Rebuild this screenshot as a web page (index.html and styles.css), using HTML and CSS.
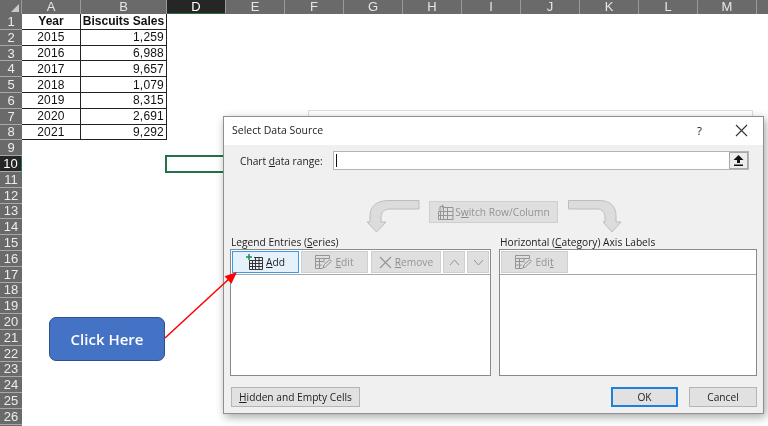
FILE: index.html
```html
<!DOCTYPE html>
<html lang="en">
<head>
<meta charset="utf-8">
<title>Select Data Source</title>
<link rel="stylesheet" href="styles.css">
</head>
<body>
<svg class="defs" width="0" height="0" aria-hidden="true">
  <symbol id="i-table" viewBox="0 0 17 16">
    <path d="M3.500 6.500h13v9h-13zM3.500 9.500h13M3.500 12.500h13M6.500 6.500v9M9.500 3.500v12M13 3.500v12M8 3.500h8.500v3" fill="none" stroke="#333"/>
    <path d="M3 0v6M0 3h6" fill="none" stroke="#1f8f50" stroke-width="1.500"/>
  </symbol>
  <symbol id="i-edit" viewBox="0 0 17 16">
    <path d="M.5 1.500h14v3h-14zM.5 4.500v10h7M4.500 4.500v10M9 4.500v4M.5 7.500h8M.5 11h6" fill="none" stroke="currentColor"/>
    <path d="M8 14l.8-3 6-5.500 1.700 1.700-6 5.600z" fill="none" stroke="currentColor"/>
  </symbol>
  <symbol id="i-switch" viewBox="0 0 17 16">
    <path d="M1.500 7.500h5v8h-5zM6.500 3.500h9.500v12h-9.500zM6.500 7.500h9.500M6.500 11.500h9.500M10.500 3.500v12M1.500 11.500h5M3.500 7.500v8" fill="none" stroke="currentColor"/>
    <path d="M3 5V2.500h3M5 .8l2 1.700-2 1.700M1.500 5l1.500 1.500L4.500 5" fill="none" stroke="currentColor"/>
  </symbol>
</svg>

<div class="sheet">
  <div class="row colhead">
    <div class="corner"><span class="corner-mark"></span></div>
    <div class="ch w-a">A</div>
    <div class="ch w-b">B</div>
    <div class="ch w-c active">D</div>
    <div class="ch w-c">E</div>
    <div class="ch w-c">F</div>
    <div class="ch w-c">G</div>
    <div class="ch w-c">H</div>
    <div class="ch w-c">I</div>
    <div class="ch w-c">J</div>
    <div class="ch w-c">K</div>
    <div class="ch w-c">L</div>
    <div class="ch w-c">M</div>
    <div class="ch w-rest"></div>
  </div>
  <div class="row"><div class="rh">1</div><div class="cell w-a head">Year</div><div class="cell w-b head">Biscuits Sales</div></div>
  <div class="row"><div class="rh">2</div><div class="cell w-a">2015</div><div class="cell w-b num">1,259</div></div>
  <div class="row"><div class="rh">3</div><div class="cell w-a">2016</div><div class="cell w-b num">6,988</div></div>
  <div class="row"><div class="rh">4</div><div class="cell w-a">2017</div><div class="cell w-b num">9,657</div></div>
  <div class="row"><div class="rh">5</div><div class="cell w-a">2018</div><div class="cell w-b num">1,079</div></div>
  <div class="row"><div class="rh">6</div><div class="cell w-a">2019</div><div class="cell w-b num">8,315</div></div>
  <div class="row"><div class="rh">7</div><div class="cell w-a">2020</div><div class="cell w-b num">2,691</div></div>
  <div class="row"><div class="rh">8</div><div class="cell w-a">2021</div><div class="cell w-b num">9,292</div></div>
  <div class="row"><div class="rh">9</div></div>
  <div class="row"><div class="rh active">10</div></div>
  <div class="row"><div class="rh">11</div></div>
  <div class="row"><div class="rh">12</div></div>
  <div class="row"><div class="rh">13</div></div>
  <div class="row"><div class="rh">14</div></div>
  <div class="row"><div class="rh">15</div></div>
  <div class="row"><div class="rh">16</div></div>
  <div class="row"><div class="rh">17</div></div>
  <div class="row"><div class="rh">18</div></div>
  <div class="row"><div class="rh">19</div></div>
  <div class="row"><div class="rh">20</div></div>
  <div class="row"><div class="rh">21</div></div>
  <div class="row"><div class="rh">22</div></div>
  <div class="row"><div class="rh">23</div></div>
  <div class="row"><div class="rh">24</div></div>
  <div class="row"><div class="rh">25</div></div>
  <div class="row"><div class="rh">26</div></div>
  <div class="row"><div class="rh"></div></div>
</div>

<div class="selected-cell"></div>
<div class="chart-frame"></div>

<section class="dialog">
  <header class="titlebar">
    <span class="title">Select Data Source</span>
    <span class="help">?</span>
    <svg class="close" width="13" height="13" viewBox="0 0 13 13"><path d="M1 1l11 11M12 1L1 12" fill="none" stroke="#333" stroke-width="1.100"/></svg>
  </header>
  <div class="body">
    <div class="range-row">
      <label class="range-label">Chart <u>d</u>ata range:</label>
      <div class="range-input">
        <span class="caret"></span>
        <span class="collapse">
          <svg width="11" height="11" viewBox="0 0 11 11"><path d="M5.500 0L10.500 5H7V8H4V5H.5zM1 9.500h9V11H1z" fill="#111"/></svg>
        </span>
      </div>
    </div>
    <div class="switch-row">
      <svg class="bend" width="54" height="33" viewBox="0 0 54 33"><path d="M52 .5V9H24C17 9 14 12 14 18V22H19L9.500 32 0 22H3V16C3 6 10 .5 22 .5Z" fill="#dcdcdc" stroke="#bdbdbd"/></svg>
      <button class="btn off switch"><svg class="ico" width="17" height="16"><use href="#i-switch"/></svg><span>S<u>w</u>itch Row/Column</span></button>
      <svg class="bend bend-right" width="54" height="33" viewBox="0 0 54 33"><path d="M.5 .5V9H29C34 9 37 12 37 18V22H35L44 32 53 22H48V16C48 6 42 .5 31 .5Z" fill="#dcdcdc" stroke="#bdbdbd"/></svg>
    </div>
    <div class="lists">
      <div class="list-col left">
        <div class="list-label">Legend Entries (<u>S</u>eries)</div>
        <div class="listbox">
          <div class="toolbar">
            <button class="btn add"><svg class="ico" width="17" height="16"><use href="#i-table"/></svg><span><u>A</u>dd</span></button>
            <button class="btn off edit"><svg class="ico" width="17" height="16"><use href="#i-edit"/></svg><span><u>E</u>dit</span></button>
            <button class="btn off remove"><svg class="ico" width="13" height="13" viewBox="0 0 13 13"><path d="M1 1l11 11M12 1L1 12" fill="none" stroke="currentColor" stroke-width="1.100"/></svg><span><u>R</u>emove</span></button>
            <button class="btn off move"><svg width="11" height="7" viewBox="0 0 11 7"><path d="M1 6l4.500-5L10 6" fill="none" stroke="currentColor"/></svg></button>
            <button class="btn off move"><svg width="11" height="7" viewBox="0 0 11 7"><path d="M1 1l4.500 5L10 1" fill="none" stroke="currentColor"/></svg></button>
          </div>
          <div class="list-area"></div>
        </div>
      </div>
      <div class="list-col right">
        <div class="list-label">Horizontal (<u>C</u>ategory) Axis Labels</div>
        <div class="listbox">
          <div class="toolbar">
            <button class="btn off edit"><svg class="ico" width="17" height="16"><use href="#i-edit"/></svg><span>Edi<u>t</u></span></button>
          </div>
          <div class="list-area"></div>
        </div>
      </div>
    </div>
    <footer class="foot">
      <button class="btn plain hidden-cells"><span><u>H</u>idden and Empty Cells</span></button>
      <div class="foot-actions">
        <button class="btn plain ok">OK</button>
        <button class="btn plain cancel">Cancel</button>
      </div>
    </footer>
  </div>
</section>

<div class="callout">Click Here</div>
<svg class="pointer" width="90" height="80" viewBox="0 0 90 80">
  <path d="M5 73L70 13" fill="none" stroke="#f00" stroke-width="1.500"/>
  <path d="M77 7L71.400 18.700 64.600 11.300z" fill="#f00"/>
</svg>
</body>
</html>
```

FILE: styles.css
```css
* { box-sizing: border-box; }
html, body { margin: 0; padding: 0; }
body {
  position: relative;
  width: 768px;
  height: 426px;
  overflow: hidden;
  background: #fff;
  font-family: "Open Sans", "Noto Sans", sans-serif;
  color: #222;
}
.defs { position: absolute; }

/* Sheet */
.sheet { display: flex; flex-direction: column; filter: blur(.35px); }
.row { display: flex; height: 15.8px; flex: none; }
.colhead { height: 14px; background: #6a6a6a; }
.corner { width: 22px; position: relative; border-right: 1px solid #9a9a9a; }
.corner-mark {
  position: absolute; right: 2px; bottom: 2px;
  border-style: solid; border-width: 0 0 8px 8px;
  border-color: transparent transparent #c9c9c9 transparent;
}
.ch {
  display: flex; align-items: center; justify-content: center;
  height: 14px;
  font: 13px/14px "Liberation Sans", Arial, sans-serif;
  color: #e6e6e6;
  background: #6a6a6a;
  border-right: 1px solid #9a9a9a;
}
.ch.active { background: #262626; color: #fff; border-bottom: 1px solid #217346; }
.w-a { width: 59px; flex: none; }
.w-b { width: 86px; flex: none; }
.w-c { width: 59px; flex: none; }
.w-rest { flex: 1; border-right: 0; }
.rh {
  width: 22px; flex: none;
  display: flex; align-items: center; justify-content: center;
  font: 13px "Liberation Sans", Arial, sans-serif;
  color: #ececec;
  background: #6a6a6a;
  border-bottom: 1px solid #a8a8a8;
}
.rh.active { background: #262626; color: #fff; border-right: 1px solid #217346; }
.cell {
  display: flex; align-items: center; justify-content: center;
  font: 12px "Liberation Sans", Arial, sans-serif;
  letter-spacing: .2px;
  color: #111;
  border-right: 1px solid #222;
  border-bottom: 1px solid #222;
}
.cell.num { justify-content: flex-end; padding-right: 2px; }
.cell.head { font-weight: 700; letter-spacing: 0; white-space: nowrap; }

.selected-cell {
  position: absolute; left: 165px; top: 155px;
  width: 62px; height: 18px;
  border: 2px solid #217346;
  filter: blur(.3px);
}
.chart-frame {
  position: absolute; left: 308px; top: 110px;
  width: 445px; height: 20px;
  background: #fff;
  border: 1px solid #dedede;
  border-bottom: 0;
}

/* Dialog */
.dialog {
  position: absolute; left: 223px; top: 116px;
  width: 541px; height: 298px;
  display: flex; flex-direction: column;
  background: #f0f0f0;
  border: 1px solid #8f8f8f;
  box-shadow: 2px 3px 9px rgba(0,0,0,.35);
  font-size: 10.2px;
  color: #222;
}
.dialog u { text-underline-offset: 1px; }
.dialog svg { display: block; flex: none; }
.titlebar {
  display: flex; align-items: center;
  height: 28px; flex: none;
  padding: 0 15px 2px 8px;
  background: #fff;
}
.title { flex: 1; font-size: 10.5px; filter: blur(.25px); }
.help { width: 12px; margin-right: 26px; font-size: 11px; color: #111; }
.body {
  flex: 1;
  display: flex; flex-direction: column;
  padding: 6px 6px 6px 6px;
  filter: blur(.3px);
}
.range-row { display: flex; align-items: center; height: 19px; padding-left: 10px; }
.range-label { width: 93px; flex: none; white-space: nowrap; }
.range-input {
  display: flex; align-items: center; justify-content: space-between;
  width: 416px; height: 19px;
  background: #fff;
  border: 1px solid #b4b4b4;
  padding: 0 0 0 2px;
}
.caret { width: 1px; height: 13px; background: #111; }
.collapse {
  width: 19px; height: 17px;
  display: flex; align-items: center; justify-content: center;
  background: #ededed;
  border: 1px solid #a8a8a8;
}
.switch-row {
  display: flex; align-items: flex-start; gap: 8px;
  margin: 31px 0 0 137px;
  height: 34px;
}
.bend { margin-top: -1px; }
.bend-right { margin-left: 2px; }

.lists { display: flex; gap: 8px; }
.list-col { display: flex; flex-direction: column; }
.list-col.left { width: 261px; }
.list-col.right { width: 258px; }
.list-label { height: 14px; line-height: 14px; padding-left: 1px; white-space: nowrap; }
.listbox {
  height: 127px;
  display: flex; flex-direction: column;
  background: #fff;
  border: 1px solid #8a8a8a;
}
.toolbar {
  display: flex; gap: 2px;
  height: 25px; flex: none;
  padding: 1px;
  border-bottom: 1px solid #a8a8a8;
}
.list-area { flex: 1; background: #fff; }

.btn {
  display: flex; align-items: center; justify-content: center; gap: 3px;
  height: 22px;
  padding: 0;
  font: inherit;
  color: #222;
  background: #e1e1e1;
  border: 1px solid #c8c8c8;
  white-space: nowrap;
}
.btn.off { color: #949494; background: #dfdfdf; border-color: #cfcfcf; }
.btn.off u { color: #8c8c8c; }
.add { width: 67px; background: #e5f1fb; border: 1px solid #3f9ae6; color: #222; }
.edit { width: 67px; }
.remove { width: 70px; margin-left: 1px; }
.move { width: 22px; }
.switch { width: 129px; gap: 1px; }
.foot {
  display: flex; justify-content: space-between;
  margin-top: 11px; padding-left: 1px;
}
.foot-actions { display: flex; gap: 11px; }
.btn.plain { height: 20px; background: #e1e1e1; border-color: #b5b5b5; }
.hidden-cells { width: 129px; }
.btn.ok { width: 67px; border: 2px solid #1e80d8; }
.cancel { width: 68px; }

/* Callout */
.callout {
  position: absolute; left: 49px; top: 317px;
  width: 116px; height: 44px;
  display: flex; align-items: center; justify-content: center;
  background: #4472c4;
  border: 1px solid #2f528f;
  border-radius: 7px;
  color: #fff;
  font-size: 15px; font-weight: 600;
  filter: blur(.25px);
}
.pointer { position: absolute; left: 160px; top: 265px; }
```
